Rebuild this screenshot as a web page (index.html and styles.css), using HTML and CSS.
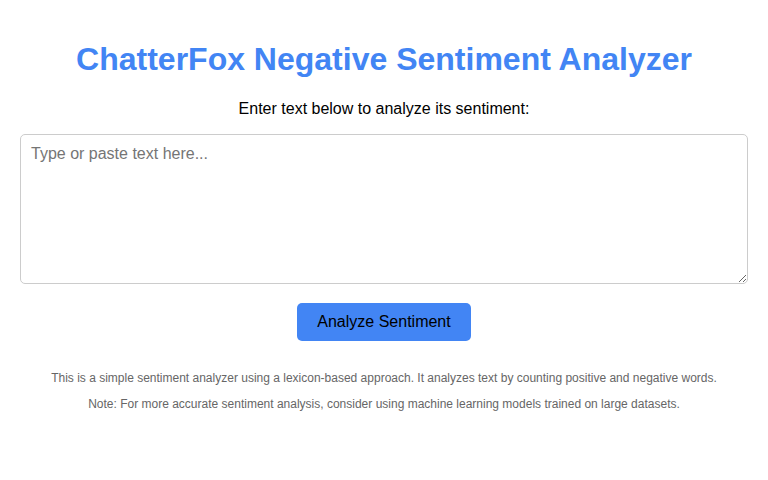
FILE: index.html
```
<!DOCTYPE html>
<html lang="en">
<head>
    <meta charset="UTF-8">
    <meta name="viewport" content="width=device-width, initial-scale=1.0">
    <title>ChatterFox Negative Sentiment Analyzer</title>
    <link rel="stylesheet" href="styles.css">
</head>
<body>
    <h1>ChatterFox Negative Sentiment Analyzer</h1>
    <p class="intro">Enter text below to analyze its sentiment:</p>
    <textarea id="textInput" placeholder="Type or paste text here..."></textarea>
    <div class="actions">
        <button id="analyzeBtn">Analyze Sentiment</button>
    </div>
    <div class="info">
        <p>This is a simple sentiment analyzer using a lexicon-based approach. It analyzes text by counting positive and negative words.</p>
        <p>Note: For more accurate sentiment analysis, consider using machine learning models trained on large datasets.</p>
    </div>
</body>
</html>
```

FILE: styles.css
```
body{
    margin: 0;
    padding: 20px;
    font-family: 'Liberation Sans', Arial, sans-serif;
    background-color: #fff;
    color: #000;
    text-align: center;
}
h1{
    font-size: 32px;
    color: #4285f4;
    margin: 21px 0 22px;
}
.intro{
    font-size: 16px;
    margin: 16px 0;
}
textarea{
    display: block;
    width: 100%;
    height: 150px;
    box-sizing: border-box;
    padding: 10px;
    font-family: 'Liberation Sans', Arial, sans-serif;
    font-size: 16px;
    border: 1px solid #ccc;
    border-radius: 5px;
    resize: vertical;
}
textarea::placeholder{
    color: #757575;
}
.actions{
    margin-top: 19px;
}
button{
    padding: 10px 20px;
    font-family: 'Liberation Sans', Arial, sans-serif;
    font-size: 16px;
    background-color: #4285f4;
    color: #000;
    border: none;
    border-radius: 5px;
    cursor: pointer;
}
button:hover{
    background-color: #3367d6;
}
.info{
    margin-top: 30px;
    font-size: 12px;
    color: #666;
}
.info p{
    margin: 12px 0;
}
```
